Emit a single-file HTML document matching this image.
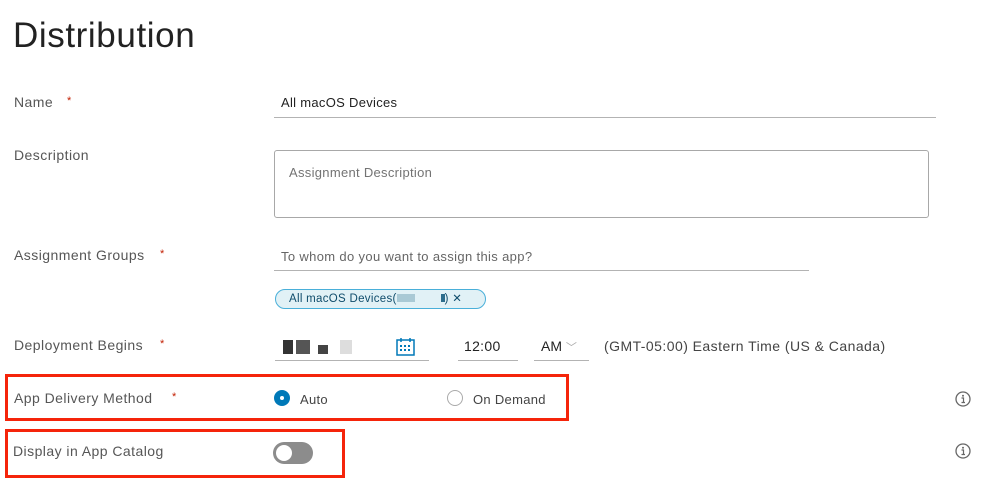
<!DOCTYPE html>
<html><head><style>
body{margin:0;width:999px;height:489px;background:#fff;font-family:"Liberation Sans",sans-serif;color:#565656;position:relative;overflow:hidden}
.a{position:absolute;white-space:nowrap}
.l{font-size:14px;color:#565656;letter-spacing:0.45px}
.s{color:#c21d00;font-size:11px}
.u{position:absolute;height:1px;background:#b3b3b3}
.box{position:absolute;border:3px solid #f5240a}
</style></head><body>
<div class="a" style="left:13px;top:16px;font-size:35px;color:#222;letter-spacing:0.6px">Distribution</div>

<div class="a l" style="left:14px;top:94px">Name</div><div class="a s" style="left:67px;top:95px">*</div>
<div class="a" style="left:281px;top:95px;font-size:13px;color:#222;letter-spacing:0.3px">All macOS Devices</div>
<div class="u" style="left:274px;top:117px;width:662px"></div>

<div class="a l" style="left:14px;top:147px">Description</div>
<div class="a" style="left:274px;top:150px;width:653px;height:66px;border:1px solid #a8a8a8;border-radius:3px"></div>
<div class="a" style="left:289px;top:165px;font-size:13px;color:#737373;letter-spacing:0.3px">Assignment Description</div>

<div class="a l" style="left:14px;top:247px">Assignment Groups</div><div class="a s" style="left:160px;top:248px">*</div>
<div class="a" style="left:281px;top:249px;font-size:13px;color:#666;letter-spacing:0.35px">To whom do you want to assign this app?</div>
<div class="u" style="left:274px;top:270px;width:535px"></div>

<div class="a" style="left:275px;top:289px;width:209px;height:18px;background:#e1f1f6;border:1px solid #49afd9;border-radius:10px"></div>
<div class="a" style="left:289px;top:291px;font-size:11.5px;color:#0f4c6b;letter-spacing:0.3px">All macOS Devices(<span style="display:inline-block;width:18px;height:8px;background:#a9c9d5"></span><span style="display:inline-block;width:26px"></span><span style="display:inline-block;width:4px;height:8px;background:#2c6c8c"></span>) ✕</div>

<div class="a l" style="left:14px;top:337px">Deployment Begins</div><div class="a s" style="left:160px;top:338px">*</div>
<div class="a" style="left:283px;top:340px;width:10px;height:14px;background:#333"></div>
<div class="a" style="left:296px;top:340px;width:14px;height:14px;background:#555"></div>
<div class="a" style="left:318px;top:345px;width:10px;height:9px;background:#444"></div>
<div class="a" style="left:340px;top:340px;width:12px;height:14px;background:#ddd"></div>
<svg class="a" style="left:396px;top:337px" width="19" height="19" viewBox="0 0 19 19"><rect x="1" y="3" width="17" height="15" fill="none" stroke="#0079b8" stroke-width="1.5"/><line x1="5" y1="1" x2="5" y2="5" stroke="#0079b8" stroke-width="1.5"/><line x1="14" y1="1" x2="14" y2="5" stroke="#0079b8" stroke-width="1.5"/><g fill="#0079b8"><rect x="4" y="8" width="2" height="2"/><rect x="8" y="8" width="2" height="2"/><rect x="12" y="8" width="2" height="2"/><rect x="4" y="12" width="2" height="2"/><rect x="8" y="12" width="2" height="2"/><rect x="12" y="12" width="2" height="2"/></g></svg>
<div class="u" style="left:275px;top:360px;width:154px"></div>
<div class="a" style="left:464px;top:338px;font-size:14px;color:#222;letter-spacing:0.3px">12:00</div>
<div class="u" style="left:458px;top:360px;width:60px"></div>
<div class="a" style="left:541px;top:338px;font-size:14px;color:#222">AM <span style="color:#aaa;font-size:11px">﹀</span></div>
<div class="u" style="left:534px;top:360px;width:55px"></div>
<div class="a" style="left:604px;top:338px;font-size:14px;color:#444;letter-spacing:0.45px">(GMT-05:00) Eastern Time (US &amp; Canada)</div>

<div class="box" style="left:5px;top:374px;width:558px;height:41px"></div>
<div class="a l" style="left:14px;top:390px">App Delivery Method</div><div class="a s" style="left:172px;top:391px">*</div>
<div class="a" style="left:274px;top:390px;width:16px;height:16px;border-radius:50%;background:#0079b8"></div>
<div class="a" style="left:280px;top:396px;width:4px;height:4px;border-radius:50%;background:#fff"></div>
<div class="a" style="left:300px;top:392px;font-size:13px;color:#444;letter-spacing:0.3px">Auto</div>
<div class="a" style="left:447px;top:390px;width:14px;height:14px;border-radius:50%;border:1px solid #aaa"></div>
<div class="a" style="left:473px;top:392px;font-size:13px;color:#444;letter-spacing:0.3px">On Demand</div>

<div class="box" style="left:5px;top:429px;width:334px;height:43px"></div>
<div class="a l" style="left:13px;top:443px">Display in App Catalog</div>
<div class="a" style="left:273px;top:442px;width:40px;height:22px;border-radius:11px;background:#8c8c8c"></div>
<div class="a" style="left:276px;top:445px;width:16px;height:16px;border-radius:50%;background:#fff"></div>

<svg class="a" style="left:955px;top:391px" width="16" height="16" viewBox="0 0 16 16"><circle cx="8" cy="8" r="7" fill="none" stroke="#666" stroke-width="1.3"/><circle cx="8" cy="4.8" r="1" fill="#666"/><path d="M6.5 7h2v4.5M6.5 11.5h3.5" fill="none" stroke="#666" stroke-width="1.2"/></svg>
<svg class="a" style="left:955px;top:443px" width="16" height="16" viewBox="0 0 16 16"><circle cx="8" cy="8" r="7" fill="none" stroke="#666" stroke-width="1.3"/><circle cx="8" cy="4.8" r="1" fill="#666"/><path d="M6.5 7h2v4.5M6.5 11.5h3.5" fill="none" stroke="#666" stroke-width="1.2"/></svg>
</body></html>
